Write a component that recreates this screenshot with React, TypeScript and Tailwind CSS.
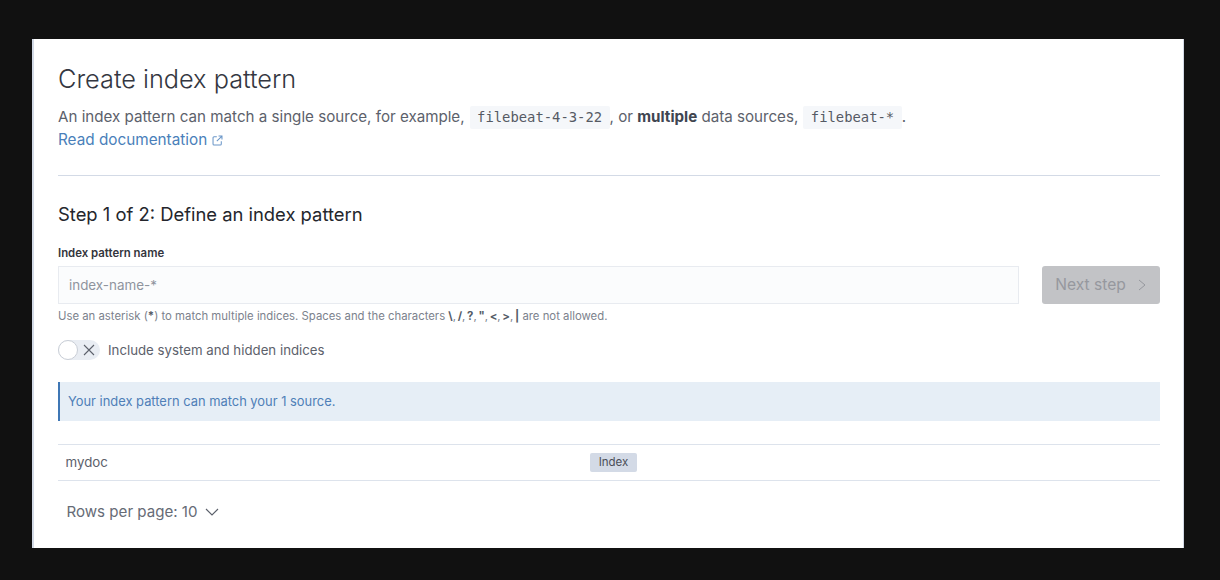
import React from "react";

const Code = ({ children }: { children: React.ReactNode }) => (
  <code className="ml-[5px] inline-block h-[23px] rounded-[2px] bg-[#f5f7fa] px-[7.5px] font-['DejaVu_Sans_Mono','Liberation_Mono',monospace] text-[13.85px] leading-[23px] text-[#555a64]">
    {children}
  </code>
);

const B = ({ children }: { children: React.ReactNode }) => <b className="font-bold text-[#555b66]">{children}</b>;

export default function App() {
  return (
    <div className="h-[580px] w-[1220px] overflow-hidden bg-[#111111] pt-[39px] font-['Inter',sans-serif]">
      <div className="ml-[32px] flex h-[509px] w-[1152px] flex-col border-r border-l-2 border-r-[#d3dae6] border-l-[#d3dae6] bg-white pr-[23px] pl-[24px]">
        <h1 className="mt-[21px] text-[25.3px] leading-[38px] font-light text-[#343741]">Create index pattern</h1>
        <p className="mt-[7px] text-[15.15px] leading-[24px] text-[#5c616b]">
          An index pattern can match a single source, for example,
          <Code>filebeat-4-3-22</Code>, or <b className="font-bold text-[#404550]">multiple</b> data sources,
          <Code>filebeat-*</Code>.
        </p>
        <a className="-mt-px flex h-[23px] items-center gap-[5px] text-[15.3px] leading-[23px] text-[#4a7fba]">
          Read documentation
          <svg width="11" height="11" viewBox="0 0 16 16" fill="none" stroke="#6a96c8" strokeWidth="1.5" className="mt-[2px]">
            <path d="M13.5 9v4a1.5 1.5 0 0 1-1.5 1.5H3A1.5 1.5 0 0 1 1.5 13V4A1.5 1.5 0 0 1 3 2.5h4" />
            <path d="M9.5 1.5h5v5M14.5 1.5 7 9" />
          </svg>
        </a>
        <div className="mt-[24px] h-px bg-[#d3dae6]" />
        <h2 className="mt-[25px] text-[18.4px] leading-[26px] font-normal text-[#24262c]">Step 1 of 2: Define an index pattern</h2>
        <label className="mt-[19px] text-[11.4px] leading-[14px] font-semibold text-[#33353c]">Index pattern name</label>
        <div className="mt-[6px] flex gap-[23px]">
          <div className="flex h-[38px] flex-1 items-center border border-[#e8ebf0] bg-[#fbfcfd] pl-[10px] text-[13.4px] text-[#8f949e]">
            index-name-*
          </div>
          <div className="flex h-[38px] w-[118px] items-center justify-center gap-[11px] rounded-[3px] bg-[#c2c3c6] text-[15.6px] text-[#96989e]">
            Next step
            <svg width="10" height="14" viewBox="0 0 10 14" fill="none" stroke="#96989e" strokeWidth="1">
              <path d="M2 2l6 5-6 5" />
            </svg>
          </div>
        </div>
        <p className="mt-[5px] text-[11.35px] leading-[14px] text-[#7c828d]">
          Use an asterisk (<B>*</B>) to match multiple indices. Spaces and the characters{" "}
          <span className="[word-spacing:-1.5px]">
            <B>\</B>, <B>/</B>, <B>?</B>, <B>"</B>, <B>&lt;</B>, <B>&gt;</B>, <B>|</B>
          </span>{" "}
          are not allowed.
        </p>
        <div className="mt-[17px] flex h-[20px] items-center gap-[8px]">
          <div className="relative flex h-[20px] w-[42px] items-center justify-end rounded-full bg-[#e9edf3] pr-[4px]">
            <span className="absolute top-0 left-0 h-[20px] w-[20px] rounded-full border border-[#c9ced6] bg-white" />
            <svg width="14" height="14" viewBox="0 0 14 14" stroke="#5c616b" strokeWidth="1.1" fill="none">
              <path d="M2 2l10 10M12 2 2 12" />
            </svg>
          </div>
          <span className="pt-[1px] text-[13.25px] text-[#5c616b]">Include system and hidden indices</span>
        </div>
        <div className="mt-[22px] flex h-[39px] items-center border-l-2 border-l-[#3f77b5] bg-[#e6eef6] pt-[1px] pl-[8px] text-[12.9px] text-[#4f7fb8]">
          Your index pattern can match your 1 source.
        </div>
        <div className="mt-[23px] flex h-[37px] items-center border-y border-[#dde3ec] pl-[7.5px] text-[13.3px] text-[#5c616b]">
          <span className="w-[524.5px]">mydoc</span>
          <span className="flex h-[19px] w-[47px] items-center justify-center rounded-[2px] bg-[#d3dae6] text-[11.5px] text-[#4a4e58]">Index</span>
        </div>
        <div className="mt-[21px] flex items-center gap-[8px] pl-[8.5px] text-[15.1px] leading-[20px] text-[#666b76]">
          Rows per page: 10
          <svg width="14" height="8" viewBox="0 0 14 8" fill="none" stroke="#5a5f6a" strokeWidth="1.1">
            <path d="M1 1l6 6 6-6" />
          </svg>
        </div>
      </div>
    </div>
  );
}
